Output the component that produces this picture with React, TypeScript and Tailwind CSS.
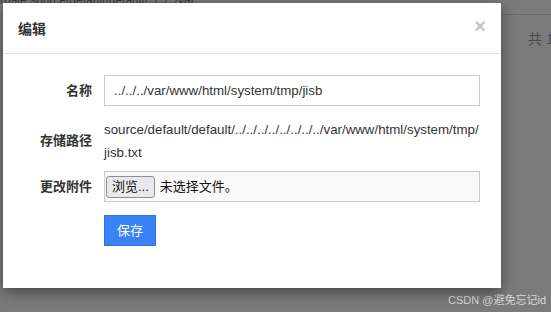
export default function App() {
  const font = { fontFamily: '"Liberation Sans", Arial, "Noto Sans CJK SC", sans-serif' };
  return (
    <div className="relative w-[551px] h-[312px] overflow-hidden bg-[#7b7b7b]" style={font}>
      {/* page behind overlay */}
      <div className="absolute left-0 top-[-9px] text-[12px] text-[#3a3a3a] whitespace-nowrap">rnale source/default/default/../../../var</div>
      <div className="absolute left-[501px] top-[14px] w-[50px] border-t border-[#6a6a6a]"></div>
      <div className="absolute left-[528px] top-[29px] text-[14px] text-[#4a4a4a] whitespace-nowrap">共 1</div>
      <div className="absolute right-[5px] bottom-[4px] text-[11px] text-[#d8d8d8] whitespace-nowrap">CSDN @避免忘记id</div>

      {/* modal */}
      <div className="absolute left-[3px] top-[3px] w-[498px] h-[285px] bg-white shadow-[0_4px_14px_rgba(0,0,0,0.45)] flex flex-col">
        <div className="h-[51px] border-b border-[#e5e5e5] flex items-center justify-between pl-[15px] pr-[15px]">
          <div className="text-[14px] font-bold text-[#333] pt-[2px]">编辑</div>
          <div className="text-[20px] font-bold text-[#c4c4c4] leading-none -mt-[5px]">×</div>
        </div>
        <div className="flex flex-col pt-[21px] text-[13.3px] text-[#333]">
          <div className="flex items-center">
            <div className="w-[89px] text-right font-bold text-[13px]">名称</div>
            <div className="ml-[12px] w-[376px] h-[31px] border border-[#ccc] flex items-center px-[9px] text-[#333]">../../../var/www/html/system/tmp/jisb</div>
          </div>
          <div className="flex items-center mt-[12px]">
            <div className="w-[89px] text-right font-bold text-[13px]">存储路径</div>
            <div className="ml-[12px] w-[376px] leading-[23px] whitespace-nowrap">
              source/default/default/../../../../../../../../var/www/html/system/tmp/
              <br />
              jisb.txt
            </div>
          </div>
          <div className="flex items-center mt-[7px]">
            <div className="w-[89px] text-right font-bold text-[13px]">更改附件</div>
            <div className="ml-[12px] w-[376px] h-[31px] border border-[#ccc] bg-[#f9f9f9] flex items-center pl-[1px]">
              <div className="h-[22px] px-[5px] border border-[#8f8f8f] rounded-[3px] bg-[#e9e9ed] flex items-center text-[13px] text-[#111]">浏览...</div>
              <div className="ml-[5px] text-[#111] text-[13px]">未选择文件。</div>
            </div>
          </div>
          <div className="mt-[13px] ml-[101px]">
            <div className="w-[52px] h-[31px] bg-[#3a82f6] border border-[#2b73ea] text-white flex items-center justify-center text-[13px]">保存</div>
          </div>
        </div>
      </div>
    </div>
  );
}
